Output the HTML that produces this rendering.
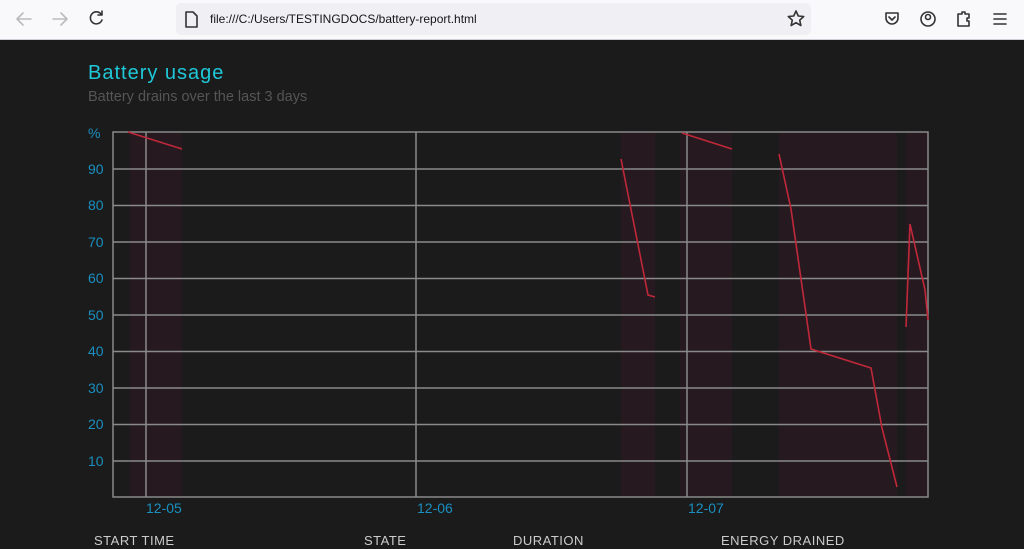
<!DOCTYPE html>
<html><head><style>
body{margin:0;width:1024px;height:549px;overflow:hidden;background:#1b1b1b;font-family:"Liberation Sans",sans-serif}
.bar{position:absolute;left:0;top:0;width:1024px;height:39px;background:#f9f9fb;border-bottom:1px solid #cfcfd8}
.url{position:absolute;left:176px;top:3px;width:635px;height:32px;background:#f0f0f4;border-radius:5px}
.url span{position:absolute;left:34px;top:9px;font-size:12px;color:#15141a}
h1{position:absolute;left:88px;top:62px;margin:0;font-weight:normal;font-size:20px;color:#1fc8d8;letter-spacing:1px}
.sub{position:absolute;left:88px;top:89px;font-size:14.5px;color:#555}
.yl{position:absolute;left:88px;font-size:14px;color:#1a8fc0}
.xl{position:absolute;top:500px;font-size:14px;color:#1a8fc0}
.th{position:absolute;top:533px;font-size:13px;color:#ccc;letter-spacing:.5px;font-weight:500}
</style></head><body>
<div class="bar">
<div class="url"><span>file:///C:/Users/TESTINGDOCS/battery-report.html</span></div>
<svg width="1024" height="39" style="position:absolute;left:0;top:0;z-index:2" fill="none" stroke-width="1.6" stroke-linecap="round" stroke-linejoin="round">
<path d="M31 19H17M23 13l-6 6 6 6" stroke="#bbb"/>
<path d="M53 19h14M61 13l6 6-6 6" stroke="#bbb"/>
<path d="M101 14a6 6 0 1 0 1 6M102 11v4h-4" stroke="#333"/>
<path d="M186 12h7l4 4v11h-11z" stroke="#333"/>
<path d="M796 11l2.3 5 5.4.5-4 3.7 1.2 5.3-4.9-2.8-4.9 2.8 1.2-5.3-4-3.7 5.4-.5z" stroke="#333"/>
<path d="M886 13h12v5a6 6 0 0 1-12 0zM889 17l3 3 3-3" stroke="#333"/>
<circle cx="928" cy="19" r="7" stroke="#333"/><circle cx="928" cy="17" r="2.5" stroke="#333"/>
<path d="M958 14h4v-2h3v2h4v4h-2v3h2v5h-11z" stroke="#333"/>
<path d="M994 14h12M994 19h12M994 24h12" stroke="#333"/>
</svg>
</div>
<h1>Battery usage</h1>
<div class="sub">Battery drains over the last 3 days</div>
<svg width="1024" height="549" style="position:absolute;left:0;top:0" fill="none">
<g fill="#261a20">
<rect x="130" y="133" width="52" height="363"/><rect x="621" y="133" width="34" height="363"/>
<rect x="680" y="133" width="52" height="363"/><rect x="779" y="133" width="118" height="363"/>
<rect x="906" y="133" width="22" height="363"/></g>
<g stroke="#8a8a8a" stroke-width="1.5">
<path d="M113 169H928M113 205.5H928M113 242H928M113 278.5H928M113 315H928M113 351.5H928M113 388H928M113 424.5H928M113 461H928"/>
<path d="M146 132V497M416 132V497M687 132V497"/>
<rect x="113" y="132" width="815" height="365"/></g>
<g stroke="#c0283a" stroke-width="1.6">
<path d="M128 132L182 149"/><path d="M621 159L648 295L655 297"/><path d="M682 133L732 149"/>
<path d="M779 154L791 209L811 349L871 368L882 428L897 487"/><path d="M906 327L910 224L925 290L928 320"/></g>
</svg>
<div class="yl" style="top:125px">%</div>
<div class="yl" style="top:161px">90</div><div class="yl" style="top:197px">80</div><div class="yl" style="top:234px">70</div>
<div class="yl" style="top:270px">60</div><div class="yl" style="top:307px">50</div><div class="yl" style="top:343px">40</div>
<div class="yl" style="top:380px">30</div><div class="yl" style="top:416px">20</div><div class="yl" style="top:453px">10</div>
<div class="xl" style="left:146px">12-05</div><div class="xl" style="left:417px">12-06</div><div class="xl" style="left:688px">12-07</div>
<div class="th" style="left:94px">START TIME</div><div class="th" style="left:364px">STATE</div>
<div class="th" style="left:513px">DURATION</div><div class="th" style="left:721px">ENERGY DRAINED</div>
</body></html>
